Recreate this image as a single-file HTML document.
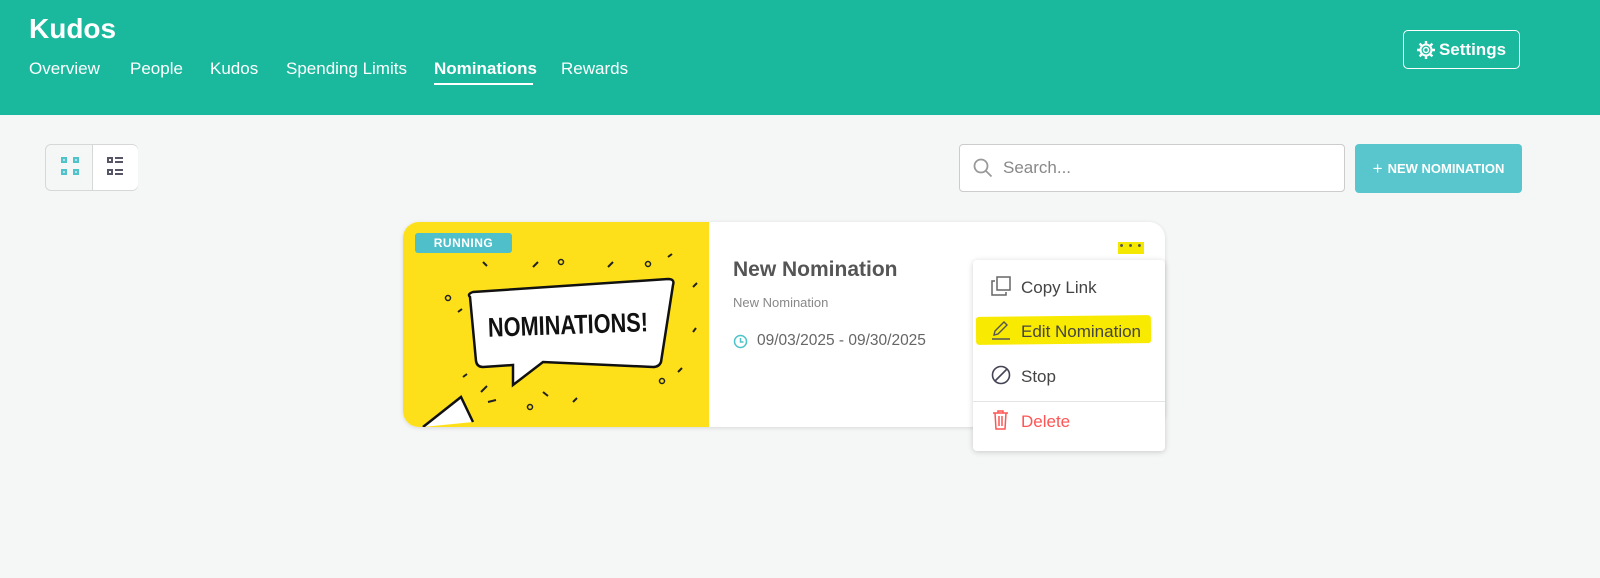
<!DOCTYPE html>
<html><head><meta charset="utf-8"><style>
*{margin:0;padding:0;box-sizing:border-box}
body{width:1600px;height:578px;background:#f5f6f6;font-family:"Liberation Sans",sans-serif;position:relative;overflow:hidden}
.hdr{position:absolute;left:0;top:0;width:1600px;height:115px;background:#1ab99e}
.t{position:absolute;left:29px;top:13px;color:#fff;font-size:28px;font-weight:bold}
.nav{position:absolute;top:59px;color:#fff;font-size:17px}
.set{position:absolute;left:1403px;top:30px;width:117px;height:39px;border:1px solid #fff;border-radius:5px;color:#fff;font-size:17px;font-weight:bold;display:flex;align-items:center;justify-content:center;gap:4px}
.tog{position:absolute;left:45px;top:144px;width:93px;height:47px;border:1px solid #d6d8d8;border-radius:6px;background:#f5f6f6}
.tog .r{position:absolute;left:46px;top:0;width:46px;height:45px;background:#fff;border-left:1px solid #d6d8d8;border-radius:0 6px 6px 0}
.sq{position:absolute;width:6px;height:6px}
.srch{position:absolute;left:959px;top:144px;width:386px;height:48px;border:1px solid #ccc;border-radius:4px;background:#fff;color:#888;font-size:17px;padding:13px 0 0 43px}
.nb{position:absolute;left:1355px;top:144px;width:167px;height:49px;background:#58c6cc;border-radius:4px;color:#fff;font-size:13px;font-weight:bold;display:flex;align-items:center;justify-content:center}
.card{position:absolute;left:403px;top:222px;width:762px;height:205px;background:#fff;border-radius:16px;overflow:hidden;box-shadow:0 1px 4px rgba(0,0,0,.12)}
.img{position:absolute;left:0;top:0;width:306px;height:205px;background:#fde01a}
.menu{position:absolute;left:973px;top:260px;width:192px;height:191px;background:#fff;border-radius:4px;box-shadow:0 1px 6px rgba(0,0,0,.18);font-size:17px;color:#444}
.mi{position:absolute;left:48px}
</style></head><body>
<div class="hdr">
<div class="t">Kudos</div>
<div class="nav" style="left:29px">Overview</div>
<div class="nav" style="left:130px">People</div>
<div class="nav" style="left:210px">Kudos</div>
<div class="nav" style="left:286px">Spending Limits</div>
<div class="nav" style="left:434px;font-weight:bold">Nominations</div>
<div style="position:absolute;left:434px;top:83px;width:99px;height:2px;background:#fff"></div>
<div class="nav" style="left:561px">Rewards</div>
<div class="set"><svg width="18" height="18" viewBox="0 0 18 18"><circle cx="9" cy="9" r="5.5" fill="none" stroke="#fff" stroke-width="2"/><circle cx="9" cy="9" r="2.5" fill="none" stroke="#fff" stroke-width="1.5"/><g stroke="#fff" stroke-width="2.4"><path d="M9 0v3M9 15v3M0 9h3M15 9h3M2.6 2.6l2.1 2.1M13.3 13.3l2.1 2.1M2.6 15.4l2.1-2.1M13.3 4.7l2.1-2.1"/></g></svg>Settings</div>
</div>
<div class="tog"><div class="r"></div>
<div class="sq" style="left:15px;top:12px;border:2px solid #4ec3c9;background:#bde"></div>
<div class="sq" style="left:27px;top:12px;border:2px solid #4ec3c9;background:#bde"></div>
<div class="sq" style="left:15px;top:24px;border:2px solid #4ec3c9;background:#bde"></div>
<div class="sq" style="left:27px;top:24px;border:2px solid #4ec3c9;background:#bde"></div>
<div class="sq" style="left:61px;top:12px;border:2px solid #556"></div><div style="position:absolute;left:69px;top:12px;width:8px;height:2px;background:#556;box-shadow:0 4px 0 #556"></div>
<div class="sq" style="left:61px;top:24px;border:2px solid #556"></div><div style="position:absolute;left:69px;top:24px;width:8px;height:2px;background:#556;box-shadow:0 4px 0 #556"></div>
</div>
<div class="srch"><svg style="position:absolute;left:13px;top:13px" width="20" height="20" viewBox="0 0 20 20"><circle cx="8" cy="8" r="6.5" fill="none" stroke="#999" stroke-width="1.8"/><path d="M13 13l5.5 5.5" stroke="#999" stroke-width="1.8"/></svg>Search...</div>
<div class="nb"><span style="font-size:17px;font-weight:normal;margin-right:5px">+</span>NEW NOMINATION</div>
<div class="card">
<div class="img">
<div style="position:absolute;left:12px;top:11px;width:97px;height:20px;background:#4fbfca;border-radius:3px;color:#fff;font-size:12px;font-weight:bold;text-align:center;line-height:20px;letter-spacing:.5px">RUNNING</div>
<svg width="306" height="205" style="position:absolute;left:0;top:0">
<path d="M67 75 Q64 72 70 70 L265 57 Q272 57 270 63 L258 140 Q256 145 250 145 L140 140 L110 163 L110 143 L80 145 Q74 145 73 139 Z" fill="#fff" stroke="#111" stroke-width="2.5"/>
<text x="165" y="112" text-anchor="middle" font-family="Liberation Sans Narrow,Liberation Sans,sans-serif" font-size="27" font-weight="bold" fill="#111" transform="rotate(-2 165 105)" textLength="160" lengthAdjust="spacingAndGlyphs">NOMINATIONS!</text>
<path d="M20 205 L58 175 L70 200" fill="#fff" stroke="#111" stroke-width="2.5"/>
<g stroke="#222" stroke-width="2"><path d="M80 40l4 4M130 45l5-5M205 45l5-5M265 35l4-3M290 65l4-4M290 110l3-4M275 150l4-4M140 170l5 4M170 180l4-4M60 155l4-3M55 90l4-3M78 170l6-6M85 180l8-2"/></g>
<g fill="none" stroke="#222" stroke-width="1.5"><circle cx="158" cy="40" r="2.5"/><circle cx="245" cy="42" r="2.5"/><circle cx="45" cy="76" r="2.5"/><circle cx="259" cy="159" r="2.5"/><circle cx="127" cy="185" r="2.5"/></g>
</svg>
</div>
<div style="position:absolute;left:330px;top:36px;font-size:21px;font-weight:bold;color:#555">New Nomination</div>
<div style="position:absolute;left:330px;top:73px;font-size:13px;color:#888">New Nomination</div>
<div style="position:absolute;left:330px;top:110px;font-size:15.5px;color:#666;display:flex;align-items:center;gap:9px"><svg width="15" height="15" viewBox="0 0 15 15"><circle cx="7.5" cy="7.5" r="6" fill="none" stroke="#4ec3c9" stroke-width="1.5"/><path d="M7.5 4v4h3" fill="none" stroke="#4ec3c9" stroke-width="1.5"/></svg>09/03/2025 - 09/30/2025</div>
<div style="position:absolute;left:715px;top:20px;width:26px;height:12px;background:#f5e800;color:#555;font-size:11px;text-align:center;line-height:8px;letter-spacing:1px">• • •</div>
</div>
<div class="menu">
<svg style="position:absolute;left:18px;top:16px" width="20" height="20" viewBox="0 0 20 20" fill="none" stroke="#666" stroke-width="1.5"><rect x="6" y="1" width="13" height="13"/><path d="M4 5H1v14h14v-3"/></svg>
<div class="mi" style="top:18px">Copy Link</div>
<div style="position:absolute;left:3px;top:56px;width:175px;height:28px;background:#f8ea00;transform:rotate(-.6deg);border-radius:3px"></div>
<svg style="position:absolute;left:18px;top:60px" width="20" height="20" viewBox="0 0 20 20" fill="none" stroke="#555" stroke-width="1.4"><path d="M3 15l1-4 9-9 3 3-9 9zM1 19h18"/></svg>
<div class="mi" style="top:62px;color:#444">Edit Nomination</div>
<svg style="position:absolute;left:18px;top:105px" width="20" height="20" viewBox="0 0 20 20" fill="none" stroke="#445" stroke-width="1.6"><circle cx="10" cy="10" r="8.5"/><path d="M4 16L16 4"/></svg>
<div class="mi" style="top:107px">Stop</div>
<div style="position:absolute;left:0;top:141px;width:192px;height:1px;background:#e4e4e4"></div>
<svg style="position:absolute;left:19px;top:150px" width="17" height="20" viewBox="0 0 17 20" fill="none" stroke="#f55" stroke-width="1.5"><path d="M1 3h15M6 3V1h5v2M3 3l1 16h9l1-16M7 6v10M10 6v10"/></svg>
<div class="mi" style="top:152px;color:#f55">Delete</div>
</div>
</body></html>
